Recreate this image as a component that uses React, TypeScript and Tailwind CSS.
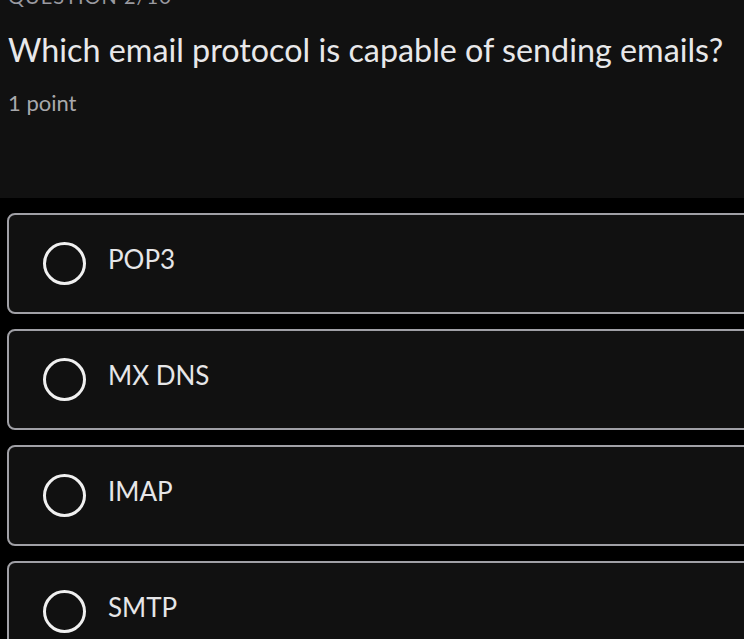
export default function App() {
  const options = ["POP3", "MX DNS", "IMAP", "SMTP"];
  return (
    <div className="w-[744px] h-[639px] overflow-hidden bg-black" style={{ fontFamily: "Lato, 'Noto Sans', sans-serif" }}>
      <div className="bg-[#111111] h-[198px] pl-[8px] flex flex-col">
        <div className="text-[#9a9aa0] text-[20px] leading-[24px] tracking-[1px] -mt-[16px]">QUESTION 2/10</div>
        <h1 className="text-[#e8e8ea] text-[32.3px] leading-[40px] mt-[22px]">Which email protocol is capable of sending emails?</h1>
        <div className="text-[#a8a8ac] text-[22px] leading-[26px] mt-[20px]">1 point</div>
      </div>
      <div className="pt-[15px] pl-[7px] flex flex-col gap-[15px]">
        {options.map((o) => (
          <div key={o} className="w-[760px] h-[101px] border-2 border-[#a0a0a6] rounded-[8px] bg-[#111111] flex items-center pl-[34px]">
            <div className="w-[43px] h-[43px] rounded-full border-[3px] border-[#f0f0f0] shrink-0" />
            <div className="ml-[22px] text-[#e6e6e8] text-[26px] leading-[32px] -mt-[9px]">{o}</div>
          </div>
        ))}
      </div>
    </div>
  );
}
